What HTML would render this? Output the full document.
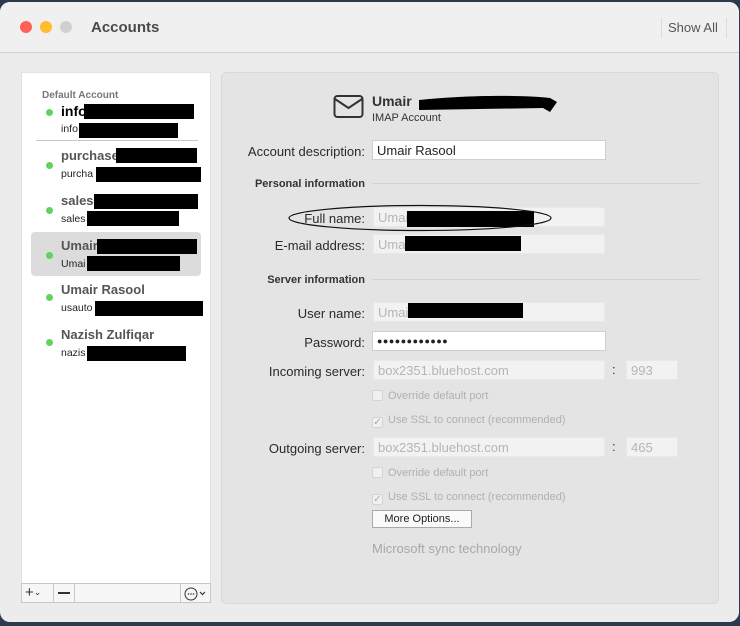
<!DOCTYPE html>
<html><head><style>
*{margin:0;padding:0;box-sizing:border-box}
body{width:740px;height:626px;background:#2b3a4c;position:relative;overflow:hidden;font-family:"Liberation Sans",sans-serif;color:#333}
.win{position:absolute;left:0;top:2px;width:739px;height:620px;background:#ececec;border-radius:10px;overflow:hidden}
.tb{position:absolute;left:0;top:0;width:100%;height:51px;background:#f0f0f0;border-bottom:1px solid #cfcfcf}
.a{position:absolute;white-space:nowrap}
.dot{position:absolute;width:12px;height:12px;border-radius:50%}
.side{position:absolute;left:21px;top:72px;width:190px;height:530px;background:#fff;border:1px solid #e2e2e2}
.gd{position:absolute;width:7px;height:7px;border-radius:50%;background:#5fd35b}
.nm{font-size:13px;font-weight:bold;color:#555}
.sub{font-size:10.5px;color:#222}
.blk{position:absolute;background:#000}
.panel{position:absolute;left:221px;top:72px;width:498px;height:532px;background:#e4e4e4;border:1px solid #d9d9d9;border-radius:5px}
.lbl{position:absolute;font-size:13px;color:#2a2a2a;text-align:right;right:375px;white-space:nowrap}
.f{position:absolute;height:20px;background:#f2f2f2;border:1px solid #e8e8e8;font-size:13px;color:#b5b5b5;padding:2px 4px;white-space:nowrap}
.w{background:#fff;border:1px solid #cfcfcf;color:#222}
.hd{position:absolute;font-size:11px;font-weight:bold;color:#333;text-align:right;right:375px}
.hl{position:absolute;left:372px;width:328px;height:1px;background:#d2d2d2}
.cb{position:absolute;font-size:11px;color:#b0b0b0;white-space:nowrap}
.cb i{display:inline-block;width:11px;height:11px;border:1px solid #d4d4d4;background:#f0f0f0;border-radius:2px;vertical-align:-2px;margin-right:5px;font-style:normal;font-size:10px;line-height:9px;text-align:center;color:#aaa}
</style></head><body>
<div class="win">
<div class="tb"></div>
<div class="dot" style="left:20px;top:19px;background:#fe5f57"></div>
<div class="dot" style="left:40px;top:19px;background:#febc2e"></div>
<div class="dot" style="left:60px;top:19px;background:#d0d0d0"></div>
<div class="a" style="left:91px;top:17px;font-size:15px;font-weight:bold;color:#4a4a4a">Accounts</div>
<div class="a" style="left:661px;top:16px;width:1px;height:20px;background:#dcdcdc"></div>
<div class="a" style="left:726px;top:16px;width:1px;height:20px;background:#dcdcdc"></div>
<div class="a" style="left:668px;top:18px;font-size:13px;color:#555">Show All</div>
</div>

<div class="side">
<div class="a" style="left:20px;top:17px;font-size:10px;font-weight:bold;color:#777">Default Account</div>
<div class="gd" style="left:24px;top:36px"></div>
<div class="a nm" style="left:39px;top:30px;color:#000;font-size:14px">info</div>
<div class="blk" style="left:62px;top:31px;width:110px;height:15px"></div>
<div class="a sub" style="left:39px;top:50px">info</div>
<div class="blk" style="left:57px;top:50px;width:99px;height:15px"></div>
<div class="a" style="left:14px;top:67px;width:162px;height:1px;background:#c8c8c8"></div>

<div class="gd" style="left:24px;top:89px"></div>
<div class="a nm" style="left:39px;top:75px">purchase</div>
<div class="blk" style="left:94px;top:75px;width:81px;height:15px"></div>
<div class="a sub" style="left:39px;top:95px">purcha</div>
<div class="blk" style="left:74px;top:94px;width:105px;height:15px"></div>

<div class="gd" style="left:24px;top:134px"></div>
<div class="a nm" style="left:39px;top:120px">sales</div>
<div class="blk" style="left:72px;top:121px;width:104px;height:15px"></div>
<div class="a sub" style="left:39px;top:140px">sales</div>
<div class="blk" style="left:65px;top:138px;width:92px;height:15px"></div>

<div class="a" style="left:9px;top:159px;width:170px;height:44px;background:#dcdcdc;border-radius:4px"></div>
<div class="gd" style="left:24px;top:179px"></div>
<div class="a nm" style="left:39px;top:165px">Umair</div>
<div class="blk" style="left:75px;top:166px;width:100px;height:15px"></div>
<div class="a sub" style="left:39px;top:185px">Umai</div>
<div class="blk" style="left:65px;top:183px;width:93px;height:15px"></div>

<div class="gd" style="left:24px;top:221px"></div>
<div class="a nm" style="left:39px;top:209px">Umair Rasool</div>
<div class="a sub" style="left:39px;top:229px">usauto</div>
<div class="blk" style="left:73px;top:228px;width:108px;height:15px"></div>

<div class="gd" style="left:24px;top:266px"></div>
<div class="a nm" style="left:39px;top:254px">Nazish Zulfiqar</div>
<div class="a sub" style="left:39px;top:274px">nazis</div>
<div class="blk" style="left:65px;top:273px;width:99px;height:15px"></div>

<div class="a" style="left:-1px;top:510px;width:190px;height:20px;border:1px solid #c8c8c8;background:#f6f6f6"></div>
<div class="a" style="left:-1px;top:510px;width:33px;height:20px;border:1px solid #c8c8c8;font-size:15px;line-height:17px;padding-left:3px;color:#333">+<span style="font-size:9px;vertical-align:2px">&#8964;</span></div>
<div class="a" style="left:31px;top:510px;width:22px;height:20px;border:1px solid #c8c8c8"><div style="margin:8px 0 0 4px;width:12px;height:2px;background:#333"></div></div>
<div class="a" style="left:158px;top:510px;width:31px;height:20px;border:1px solid #c8c8c8"><svg width="30" height="18"><circle cx="10" cy="10" r="6" fill="none" stroke="#333" stroke-width="1"/><circle cx="7.5" cy="10" r=".8" fill="#333"/><circle cx="10" cy="10" r=".8" fill="#333"/><circle cx="12.5" cy="10" r=".8" fill="#333"/><path d="M19 8 L21.5 10.5 L24 8" fill="none" stroke="#333" stroke-width="1.2"/></svg></div>
</div>

<div class="panel"></div>
<svg class="a" style="left:333px;top:94px" width="32" height="26"><rect x="1.5" y="2" width="28" height="21" rx="3" fill="none" stroke="#333" stroke-width="2"/><path d="M2 5 L15.5 14 L29 5" fill="none" stroke="#333" stroke-width="2"/></svg>
<div class="a" style="left:372px;top:93px;font-size:14px;font-weight:bold;color:#333">Umair</div>
<svg class="a" style="left:415px;top:90px" width="150" height="26"><path d="M4 10 C40 6 100 4 135 8 L142 12 L135 22 L128 18 L4 20 Z" fill="#000"/></svg>
<div class="a" style="left:372px;top:112px;font-size:11px;color:#333">IMAP Account</div>

<div class="lbl" style="top:144px">Account description:</div>
<div class="f w" style="left:372px;top:140px;width:234px;color:#222">Umair Rasool</div>

<div class="hd" style="top:178px">Personal information</div>
<div class="hl" style="top:183px"></div>

<div class="lbl" style="top:211px">Full name:</div>
<div class="f" style="left:373px;top:207px;width:232px">Umai</div>
<div class="blk" style="left:407px;top:211px;width:127px;height:16px"></div>
<svg class="a" style="left:285px;top:202px" width="270" height="32"><ellipse cx="135" cy="16" rx="131" ry="12.5" fill="none" stroke="#111" stroke-width="1.2"/></svg>

<div class="lbl" style="top:238px">E-mail address:</div>
<div class="f" style="left:373px;top:234px;width:232px">Umai</div>
<div class="blk" style="left:405px;top:236px;width:116px;height:15px"></div>

<div class="hd" style="top:274px">Server information</div>
<div class="hl" style="top:279px"></div>

<div class="lbl" style="top:306px">User name:</div>
<div class="f" style="left:373px;top:302px;width:232px">Umai</div>
<div class="blk" style="left:408px;top:303px;width:115px;height:15px"></div>

<div class="lbl" style="top:335px">Password:</div>
<div class="f w" style="left:372px;top:331px;width:234px;font-size:9px;letter-spacing:0.5px;color:#222;padding-top:4px">●●●●●●●●●●●●</div>

<div class="lbl" style="top:364px">Incoming server:</div>
<div class="f" style="left:373px;top:360px;width:232px">box2351.bluehost.com</div>
<div class="a" style="left:612px;top:362px;font-size:13px;color:#333">:</div>
<div class="f" style="left:626px;top:360px;width:52px">993</div>
<div class="cb" style="left:372px;top:390px"><i></i>Override default port</div>
<div class="cb" style="left:372px;top:414px"><i>✓</i>Use SSL to connect (recommended)</div>

<div class="lbl" style="top:441px">Outgoing server:</div>
<div class="f" style="left:373px;top:437px;width:232px">box2351.bluehost.com</div>
<div class="a" style="left:612px;top:439px;font-size:13px;color:#333">:</div>
<div class="f" style="left:626px;top:437px;width:52px">465</div>
<div class="cb" style="left:372px;top:467px"><i></i>Override default port</div>
<div class="cb" style="left:372px;top:491px"><i>✓</i>Use SSL to connect (recommended)</div>

<div class="a" style="left:372px;top:510px;width:100px;height:18px;background:#fafafa;border:1px solid #aaa;font-size:11px;color:#222;text-align:center;line-height:16px">More Options...</div>
<div class="a" style="left:372px;top:541px;font-size:13px;color:#a8a8a8">Microsoft sync technology</div>
</body></html>
